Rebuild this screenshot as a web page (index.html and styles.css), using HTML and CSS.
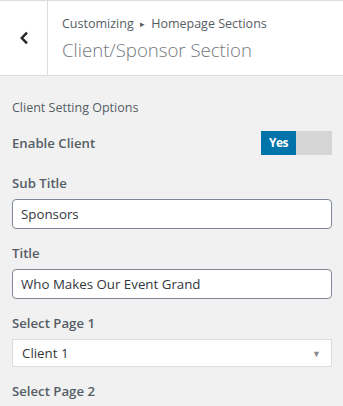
FILE: index.html
```html
<!DOCTYPE html>
<html>
<head>
  <title>Client/Sponsor Section</title>
  <link rel="stylesheet" href="styles.css">
</head>
<body>
  <div class="section-header">
    <button class="back-btn" aria-label="Back">
      <svg width="10" height="14" viewBox="0 0 10 14"><path d="M8 1.6 L2.8 7 L8 12.4" fill="none" stroke="#23282d" stroke-width="2.5"/></svg>
    </button>
    <div class="section-title">
      <div class="crumbs">Customizing <span class="arrow">&#9656;</span> Homepage Sections</div>
      <h3>Client/Sponsor Section</h3>
    </div>
  </div>

  <div class="controls">
    <div class="group-title">Client Setting Options</div>

    <div class="control toggle-row">
      <span class="control-label">Enable Client</span>
      <div class="toggle">
        <span class="toggle-on">Yes</span>
        <span class="toggle-off"></span>
      </div>
    </div>

    <div class="control">
      <label class="control-label" for="sub-title">Sub Title</label>
      <input type="text" id="sub-title" value="Sponsors">
    </div>

    <div class="control">
      <label class="control-label" for="title">Title</label>
      <input type="text" id="title" value="Who Makes Our Event Grand">
    </div>

    <div class="control">
      <label class="control-label">Select Page 1</label>
      <div class="select">
        <span>Client 1</span>
        <span class="caret">&#9660;</span>
      </div>
    </div>

    <div class="control">
      <label class="control-label">Select Page 2</label>
    </div>
  </div>
</body>
</html>
```

FILE: styles.css
```css
body {
  font-family: "Open Sans", Arial, sans-serif;
  margin: 0;
  background-color: #f1f1f1;
  color: #555d66;
  overflow: hidden;
}

.section-header {
  display: flex;
  height: 74px;
  background-color: #fff;
  border-top: 1px solid #ddd;
  border-bottom: 1px solid #ddd;
}

.back-btn {
  width: 48px;
  padding: 0 0 0 1px;
  background: none;
  border: none;
  border-right: 1px solid #ddd;
  display: flex;
  align-items: center;
  justify-content: center;
}

.section-title {
  padding: 13px 14px 0 14px;
}

.crumbs {
  font-size: 12.5px;
  line-height: 20px;
  color: #555d66;
}

.crumbs .arrow {
  font-size: 9px;
  margin: 0 3px;
  position: relative;
  top: -1px;
}

.section-title h3 {
  margin: 3px 0 0;
  font-size: 18.6px;
  font-weight: 300;
  line-height: 24px;
  color: #72777c;
}

.controls {
  padding: 23px 11px 0 12px;
}

.group-title {
  font-size: 12.5px;
  line-height: 18px;
  margin-bottom: 14px;
}

.control {
  margin-bottom: 15px;
}

.control-label {
  display: block;
  font-size: 13.2px;
  font-weight: 600;
  line-height: 18px;
  margin-bottom: 7px;
}

.toggle-row {
  display: flex;
  justify-content: space-between;
  align-items: center;
  margin-bottom: 19px;
}

.toggle-row .control-label {
  margin-bottom: 0;
}

.toggle {
  display: flex;
  height: 24px;
  width: 71px;
}

.toggle-on {
  width: 35px;
  background-color: #0073aa;
  color: #fff;
  font-size: 12px;
  font-weight: 700;
  letter-spacing: -0.5px;
  line-height: 24px;
  text-align: center;
}

.toggle-off {
  flex: 1;
  background-color: #d5d5d5;
}

input[type="text"] {
  display: block;
  box-sizing: border-box;
  width: 100%;
  height: 30px;
  padding: 0 8px;
  border: 1px solid #7e8993;
  border-radius: 4px;
  font-family: inherit;
  font-size: 13.3px;
  color: #32373c;
  background-color: #fff;
}

.select {
  display: flex;
  justify-content: space-between;
  align-items: center;
  box-sizing: border-box;
  height: 28px;
  margin-bottom: 2px;
  padding: 0 9px;
  border: 1px solid #ddd;
  background-color: #fff;
  font-size: 13.3px;
  color: #32373c;
}

.select .caret {
  font-size: 9px;
  color: #8c8c8c;
  margin-right: 1px;
}
```
